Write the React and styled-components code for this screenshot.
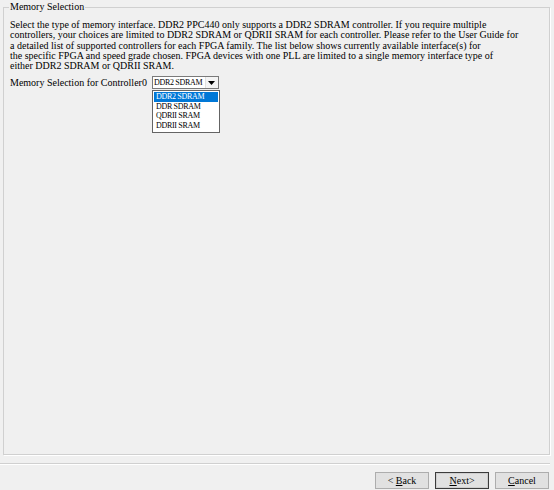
import React from "react";
import styled, { createGlobalStyle, css } from "styled-components";

const GlobalStyle = createGlobalStyle`
  html, body {
    margin: 0;
    padding: 0;
    background: #f0f0f0;
  }
  body {
    font-family: "Liberation Serif", "Times New Roman", serif;
    font-size: 10px;
    color: #000;
  }
`;

const StyledWindow = styled.div`
  width: 554px;
  height: 490px;
  display: flex;
  flex-direction: column;
  overflow: hidden;
  background: #f0f0f0;
`;

const StyledGroup = styled.fieldset`
  box-sizing: border-box;
  height: 454px;
  margin: 1px 4px 0 3px;
  padding: 7px 6px 0 6px;
  border: 1px solid #d0d0d0;
  box-shadow: 1px 1px 0 #fff;
  min-width: 0;
`;

const StyledLegend = styled.legend`
  padding: 0 1px;
  margin-left: -1px;
  line-height: 12px;
`;

const StyledIntro = styled.p`
  margin: 0;
  line-height: 10.3px;
  white-space: nowrap;
`;

const StyledRow = styled.div`
  display: flex;
  align-items: flex-start;
  margin-top: 5px;
`;

const StyledLabel = styled.span`
  line-height: 13px;
  margin-right: 5px;
`;

const StyledCombo = styled.div`
  position: relative;
  width: 67px;
  font-size: 8px;
  letter-spacing: -0.3px;
  white-space: nowrap;
`;

const StyledComboBox = styled.div`
  box-sizing: border-box;
  height: 13px;
  display: flex;
  align-items: stretch;
  background: #fff;
  border: 1px solid #7a7a7a;
`;

const StyledComboText = styled.span`
  flex: 1;
  padding-left: 1px;
  line-height: 11px;
`;

const StyledArrowButton = styled.span`
  width: 12px;
  display: flex;
  align-items: center;
  justify-content: center;
  background: #f4f4f4;
  border-left: 1px solid #e0e0e0;
`;

const StyledList = styled.ul`
  position: absolute;
  top: 14px;
  left: 0;
  box-sizing: border-box;
  width: 68px;
  margin: 0;
  padding: 1px 1px 2px;
  list-style: none;
  background: #fff;
  border: 1px solid #646464;
`;

const StyledOption = styled.li`
  height: 9.5px;
  line-height: 9.5px;
  padding-left: 2px;
  ${(p) =>
    p.$selected &&
    css`
      background: #0078d7;
      color: #fff;
    `}
`;

const StyledSeparator = styled.div`
  height: 1px;
  margin: 8px 4px 0 0;
  background: #d0d0d0;
  border-bottom: 1px solid #fff;
`;

const StyledButtons = styled.div`
  display: flex;
  justify-content: flex-end;
  gap: 6px;
  margin: 7px 5px 0 0;
`;

const StyledButton = styled.button`
  box-sizing: border-box;
  width: 54px;
  height: 17px;
  padding: 0;
  font-family: inherit;
  font-size: 10px;
  color: #000;
  background: #e1e1e1;
  border: 1px solid #adadad;
  ${(p) =>
    p.$default &&
    css`
      border-color: #3c3c3c;
      box-shadow: inset 0 0 0 1px #cfcfcf;
    `}

  u {
    text-decoration: underline;
  }
`;

const intro = [
  "Select the type of memory interface. DDR2 PPC440 only supports a DDR2 SDRAM controller. If you require multiple",
  "controllers, your choices are limited to DDR2 SDRAM or QDRII SRAM for each controller. Please refer to the User Guide for",
  "a detailed list of supported controllers for each FPGA family. The list below shows currently available interface(s) for",
  "the specific FPGA and speed grade chosen. FPGA devices with one PLL are limited to a single memory interface type of",
  "either DDR2 SDRAM or QDRII SRAM.",
];

const options = ["DDR2 SDRAM", "DDR SDRAM", "QDRII SRAM", "DDRII SRAM"];

export default function App() {
  const selected = options[0];

  return (
    <>
      <GlobalStyle />
      <StyledWindow>
        <StyledGroup>
          <StyledLegend>Memory Selection</StyledLegend>
          {intro.map((line) => (
            <StyledIntro key={line}>{line}</StyledIntro>
          ))}
          <StyledRow>
            <StyledLabel>Memory Selection for Controller0</StyledLabel>
            <StyledCombo>
              <StyledComboBox>
                <StyledComboText>{selected}</StyledComboText>
                <StyledArrowButton>
                  <svg width="7" height="4" viewBox="0 0 7 4">
                    <path d="M0 0h7L3.5 4z" fill="#000" />
                  </svg>
                </StyledArrowButton>
              </StyledComboBox>
              <StyledList>
                {options.map((o) => (
                  <StyledOption key={o} $selected={o === selected}>
                    {o}
                  </StyledOption>
                ))}
              </StyledList>
            </StyledCombo>
          </StyledRow>
        </StyledGroup>
        <StyledSeparator />
        <StyledButtons>
          <StyledButton>
            &lt; <u>B</u>ack
          </StyledButton>
          <StyledButton $default>
            <u>N</u>ext&gt;
          </StyledButton>
          <StyledButton>
            <u>C</u>ancel
          </StyledButton>
        </StyledButtons>
      </StyledWindow>
    </>
  );
}
